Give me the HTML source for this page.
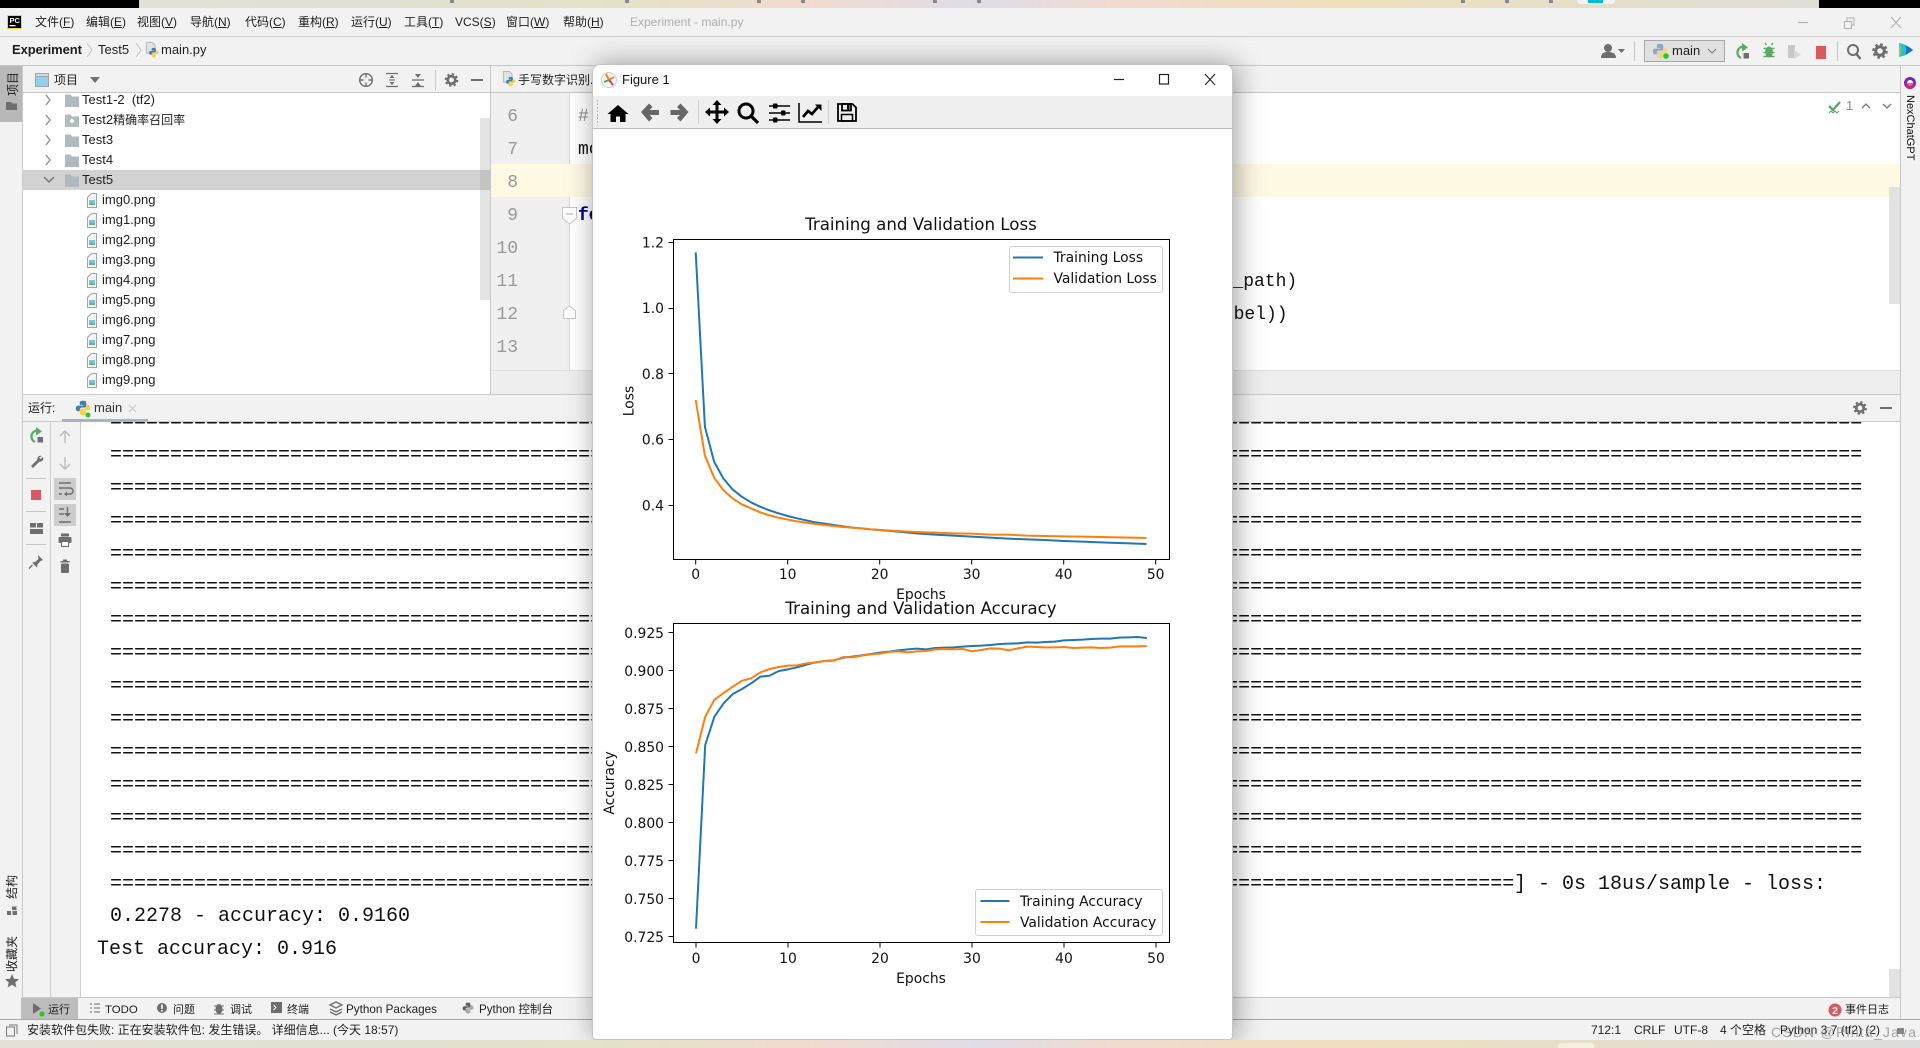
<!DOCTYPE html>
<html><head><meta charset="utf-8"><title>Experiment - main.py</title>
<style>
html,body{margin:0;padding:0;background:#f2f2f2}
#r{position:relative;width:1920px;height:1048px;overflow:hidden;background:#f2f2f2;font-family:"Liberation Sans","Noto Sans CJK SC",sans-serif;font-size:12px;color:#1e1e1e}
.b{position:absolute}
.t{position:absolute;white-space:pre;line-height:20px;height:20px}
.s13{font-size:13px}
.s11{font-size:11px}
.m{font-family:"Liberation Mono","DejaVu Sans Mono",monospace}
.n{position:absolute;font-family:"Liberation Mono",monospace;font-size:18px;color:#999;line-height:33px;height:33px;width:30px;left:488px;text-align:right}
.c{position:absolute;font-family:"Liberation Mono",monospace;font-size:18px;line-height:33px;height:33px;white-space:pre;color:#111}
.l{position:absolute;left:110px;width:1752px;height:33px;line-height:33px;overflow:hidden;white-space:pre;font-family:"Liberation Mono",monospace;font-size:20px;color:#111}
.v{position:absolute;transform:translate(-50%,-50%) rotate(-90deg);font-size:12px;line-height:14px;white-space:nowrap}
svg{position:absolute;left:0;top:0}
svg text{font-family:"DejaVu Sans",sans-serif;font-size:13.89px;fill:#111}
</style></head><body><div id="r">

<!-- wallpaper -->
<div class="b" style="left:0;top:0;width:1920px;height:8px;background:linear-gradient(90deg,#e4e0d8 0,#e2e0d2 20%,#e4e2c6 32%,#f0dccf 42%,#e0dce8 51%,#f0dccf 58%,#eee0bb 70%,#e8dfc8 80%,#dcdcdc 100%)"></div>
<div class="b" style="left:0;top:0;width:139px;height:8px;background:#000"></div>
<div class="b" style="left:1819px;top:0;width:101px;height:8px;background:#000"></div>
<div class="b" style="left:450px;top:0;width:4px;height:3px;background:#888"></div>
<div class="b" style="left:625px;top:0;width:4px;height:3px;background:#888"></div>
<div class="b" style="left:757px;top:0;width:4px;height:3px;background:#888"></div>
<div class="b" style="left:801px;top:0;width:4px;height:3px;background:#888"></div>
<div class="b" style="left:933px;top:0;width:4px;height:3px;background:#888"></div>
<div class="b" style="left:977px;top:0;width:4px;height:3px;background:#888"></div>
<div class="b" style="left:1461px;top:0;width:4px;height:3px;background:#888"></div>
<div class="b" style="left:1505px;top:0;width:4px;height:3px;background:#888"></div>
<div class="b" style="left:1549px;top:0;width:4px;height:3px;background:#888"></div>
<div class="b" style="left:1577px;top:0;width:38px;height:4px;background:#f4f4f4;border-radius:0 0 4px 4px"></div>
<div class="b" style="left:1588px;top:0;width:15px;height:3px;background:#00bcd0"></div>

<!-- lines / panels -->
<div class="b" style="left:0;top:36px;width:1920px;height:1px;background:#cfcfcf"></div>
<div class="b" style="left:0;top:65px;width:1920px;height:1px;background:#c6c6c6"></div>
<div class="b" style="left:22px;top:66px;width:1px;height:954px;background:#c9c9c9"></div>
<div class="b" style="left:0;top:66px;width:22px;height:56px;background:#b8b8b8"></div>
<div class="b" style="left:22px;top:92px;width:1878px;height:1px;background:#c6c6c6"></div>
<div class="b" style="left:1900px;top:66px;width:1px;height:954px;background:#c6c6c6"></div>

<!-- project tree -->
<div class="b" style="left:23px;top:93px;width:467px;height:301px;background:#fff"></div>
<div class="b" style="left:23px;top:170px;width:467px;height:20px;background:#d2d2d2"></div>
<div class="b" style="left:480px;top:118px;width:10px;height:182px;background:#e4e4e4"></div>
<div class="b" style="left:480px;top:170px;width:10px;height:20px;background:#c4c4c4"></div>
<div class="b" style="left:490px;top:66px;width:1px;height:328px;background:#c6c6c6"></div>

<!-- editor -->
<div class="b" style="left:491px;top:93px;width:1409px;height:277px;background:#fff"></div>
<div class="b" style="left:491px;top:93px;width:78px;height:277px;background:#f0f0f0"></div>
<div class="b" style="left:569px;top:93px;width:1px;height:277px;background:#d9d9d9"></div>
<div class="b" style="left:491px;top:164px;width:1409px;height:33px;background:#fef9e3"></div>
<div class="b" style="left:1889px;top:187px;width:11px;height:117px;background:#e2e2e2"></div>
<div class="b" style="left:491px;top:370px;width:1409px;height:24px;background:#eeeeee;border-top:1px solid #e0e0e0;box-sizing:border-box"></div>

<div class="n" style="top:101px">6</div><div class="n" style="top:134px">7</div><div class="n" style="top:167px">8</div><div class="n" style="top:200px">9</div><div class="n" style="top:233px">10</div><div class="n" style="top:266px">11</div><div class="n" style="top:299px">12</div><div class="n" style="top:332px">13</div>
<div class="c" style="left:578px;top:101px;color:#8c8c8c">#</div>
<div class="c" style="left:578px;top:134px">mo</div>
<div class="c" style="left:578px;top:200px;color:#000080;font-weight:bold">for</div>
<div class="c" style="left:1200px;top:266px">img_path)</div>
<div class="c" style="left:1212px;top:299px">label))</div>

<!-- run window -->
<div class="b" style="left:23px;top:394px;width:1877px;height:1px;background:#c9c9c9"></div>
<div class="b" style="left:23px;top:421px;width:1877px;height:1px;background:#c9c9c9"></div>
<div class="b" style="left:62px;top:419px;width:86px;height:3px;background:#a9b3c4"></div>
<div class="b" style="left:81px;top:422px;width:1819px;height:575px;background:#fff"></div>
<div class="b" style="left:50px;top:422px;width:1px;height:575px;background:#cfcfcf"></div>
<div class="b" style="left:80px;top:422px;width:1px;height:575px;background:#cfcfcf"></div>
<div class="b" style="left:54px;top:478px;width:22px;height:22px;background:#cdcdcd"></div>
<div class="b" style="left:54px;top:504px;width:22px;height:22px;background:#cdcdcd"></div>
<div class="b" style="left:26px;top:478px;width:20px;height:1px;background:#c6c6c6"></div>
<div class="b" style="left:26px;top:511px;width:20px;height:1px;background:#c6c6c6"></div>
<div class="b" style="left:26px;top:544px;width:20px;height:1px;background:#c6c6c6"></div>
<div class="b" style="left:1889px;top:969px;width:11px;height:28px;background:#e2e2e2"></div>

<!-- console -->
<div class="b" style="left:81px;top:422px;width:1819px;height:575px;overflow:hidden">
<div class="l" style="left:29px;top:-16px">======================================================================================================================================================</div>
</div>
<div class="l" style="top:439px">======================================================================================================================================================</div>
<div class="l" style="top:472px">======================================================================================================================================================</div>
<div class="l" style="top:505px">======================================================================================================================================================</div>
<div class="l" style="top:538px">======================================================================================================================================================</div>
<div class="l" style="top:571px">======================================================================================================================================================</div>
<div class="l" style="top:604px">======================================================================================================================================================</div>
<div class="l" style="top:637px">======================================================================================================================================================</div>
<div class="l" style="top:670px">======================================================================================================================================================</div>
<div class="l" style="top:703px">======================================================================================================================================================</div>
<div class="l" style="top:736px">======================================================================================================================================================</div>
<div class="l" style="top:769px">======================================================================================================================================================</div>
<div class="l" style="top:802px">======================================================================================================================================================</div>
<div class="l" style="top:835px">======================================================================================================================================================</div>
<div class="l" style="top:868px;width:1404px">======================================================================================================================================================</div>
<div class="l" style="top:868px;left:1514px;width:340px">] - 0s 18us/sample - loss:</div>
<div class="l" style="top:900px">0.2278 - accuracy: 0.9160</div>
<div class="l" style="top:933px;left:97px">Test accuracy: 0.916</div>

<!-- bottom bars -->
<div class="b" style="left:22px;top:997px;width:1878px;height:1px;background:#c9c9c9"></div>
<div class="b" style="left:21px;top:998px;width:57px;height:21px;background:#bdbdbd"></div>
<div class="b" style="left:0;top:1019px;width:1920px;height:1px;background:#a8a8a8"></div>

<!-- IDE icons -->
<svg width="1920" height="1048" viewBox="0 0 1920 1048">
<defs>
<symbol id="py" viewBox="0 0 16 16" overflow="visible">
<path fill="#3f7fb6" d="M8 .8C5.400 .8 4.800 1.800 4.800 3v1.900H8.200v.7H3.300C1.800 5.600 .8 6.800 .8 8.400c0 1.800 1 2.900 2.300 2.900H4.800V9.500C4.800 8.300 5.700 7.500 6.900 7.500h2.400c1.200 0 2-.9 2-2V3C11.300 1.700 10.300 .8 8 .8z"/>
<path fill="#f8cf45" d="M8 15.200c2.600 0 3.200-1 3.200-2.200v-1.900H7.800v-.7h4.900c1.500 0 2.500-1.200 2.500-2.800 0-1.800-1-2.900-2.300-2.900h-1.700v1.800c0 1.200-.9 2-2.100 2H6.700c-1.200 0-2 .9-2 2V13c0 1.300 1 2.200 3.300 2.200z"/>
</symbol>
<symbol id="pyf" viewBox="0 0 16 18" overflow="visible">
<path fill="#dfe3e6" stroke="#aab2b8" d="M1.500 .5h7l3 3v9h-10z"/>
<use href="#py" x="4" y="6" width="12" height="12"/>
</symbol>
<symbol id="fo" viewBox="0 0 14 13" overflow="visible">
<path fill="#aeb9c0" d="M0 .5h5.500l1.500 2h7v10.500H0z"/>
</symbol>
<symbol id="im" viewBox="0 0 10 15" overflow="visible">
<path fill="#f6f6f6" stroke="#9aa4aa" d="M.5 4.500l4-4h5v14h-9z"/>
<rect x="2" y="7" width="6" height="5" fill="#7cc5e8"/><path d="M2 12l2-3 2 2 2-1.500V12z" fill="#62b37a"/>
</symbol>
<symbol id="gear" viewBox="0 0 16 16" overflow="visible">
<circle cx="8" cy="8" r="4.300" fill="none" stroke="#6e6e6e" stroke-width="3"/>
<circle cx="8" cy="8" r="6.600" fill="none" stroke="#6e6e6e" stroke-width="2.400" stroke-dasharray="2.600 2.580"/>
</symbol>
</defs>

<!-- PC logo -->
<rect x="7.500" y="15.500" width="14" height="13" fill="#000" stroke="#f0d83c"/>
<text x="9.500" y="23" style="font-family:'Liberation Sans';font-size:7.500px;font-weight:bold;fill:#fff">PC</text>
<rect x="9.500" y="25" width="6" height="1.300" fill="#fff"/>

<!-- window controls -->
<path d="M1798 22.500h10" stroke="#b0b0b0" stroke-width="1.200"/>
<path d="M1844.500 24.500h7v7h-7zM1847 24v-3h7v7h-2.500" fill="none" stroke="#b0b0b0" transform="translate(0,-3)"/>
<path d="M1891 17l10 11M1901 17l-10 11" stroke="#b0b0b0" stroke-width="1.100"/>

<!-- nav chevrons -->
<path d="M87 43l5 7-5 7M136 43l5 7-5 7" fill="none" stroke="#c4c4c4"/>
<use href="#pyf" x="145" y="42" width="14" height="16"/>

<!-- toolbar right -->
<circle cx="1608" cy="48" r="4" fill="#6e6e6e"/><path d="M1601 58c0-5 3-6 7-6s8 1 8 6z" fill="#6e6e6e"/>
<path d="M1618 49h7l-3.500 4z" fill="#6e6e6e"/>
<rect x="1634" y="41" width="1" height="20" fill="#c8c8c8"/>
<rect x="1644.500" y="40.500" width="80" height="21" fill="#e0e0e0" stroke="#a8a8a8"/>
<use href="#py" x="1652" y="43" width="16" height="16" opacity=".55"/>
<circle cx="1666" cy="56" r="2.800" fill="#22cc22"/>
<path d="M1708 49l4 4 4-4" fill="none" stroke="#777"/>
<path d="M1746 47a6 6 0 1 0-5 11" fill="none" stroke="#59a869" stroke-width="2.200"/><path d="M1742 43l6 4.500-6 4z" fill="#59a869"/><rect x="1743.500" y="53" width="5.500" height="5.500" fill="#6e6e6e"/>
<ellipse cx="1769" cy="52" rx="3.800" ry="5.500" fill="#59a869"/><path d="M1763.500 48.500h11M1763.500 52.500h11M1763.500 56.500h11M1766.500 45l-1.500-2M1771.500 45l1.500-2" stroke="#59a869" stroke-width="1.400"/>
<path d="M1788 45h7v13h-7z" fill="#c8c8c8"/><path d="M1794 50l7 4.500-7 4.500z" fill="#d8d8d8"/>
<rect x="1816" y="46" width="10" height="13" fill="#db5860"/>
<rect x="1837" y="41" width="1" height="20" fill="#c8c8c8"/>
<circle cx="1853" cy="50" r="5" fill="none" stroke="#6e6e6e" stroke-width="2"/><path d="M1856.500 54l4 5" stroke="#6e6e6e" stroke-width="2.400"/>
<use href="#gear" x="1872" y="43" width="16" height="16"/>
<path d="M1899 43c6 1 11 4 14 7-3 3-8 6-14 7z" fill="#1ec4d8"/><path d="M1899 43c3.500 4 3.500 10 0 14z" fill="#86c850"/><path d="M1905 45.500c3 1 6 2.800 8 4.500-2 1.700-5 3.500-8 4.500 1.500-3 1.500-6 0-9z" fill="#1f6fd0"/>

<!-- right strip -->
<circle cx="1910" cy="83" r="6" fill="#7c22b8"/><circle cx="1910" cy="83" r="3" fill="#fff"/><path d="M1904 83a6 6 0 0 0 12 0z" fill="#d02a78" opacity=".7"/>

<!-- project header -->
<rect x="35.500" y="73.500" width="13" height="13" fill="#8fd2ee" stroke="#9aa4aa"/><rect x="35.500" y="73.500" width="13" height="3" fill="#d4dde2" stroke="#9aa4aa"/>
<path d="M90 77h10l-5 6z" fill="#707070"/>
<circle cx="366" cy="80" r="6.300" fill="none" stroke="#6e6e6e" stroke-width="1.400"/><path d="M366 74v3.500M366 82.500V86M360 80h3.500M368.500 80H372" stroke="#6e6e6e" stroke-width="1.400"/>
<path d="M386 73.500h12M386 86.500h12M389 80h6" stroke="#6e6e6e" stroke-width="1.300"/><path d="M392 75l-2.500 3h5zM392 85l-2.500-3h5z" fill="#6e6e6e"/>
<path d="M412 80h12" stroke="#6e6e6e" stroke-width="1.300"/><path d="M412 86.500h12" stroke="#6e6e6e" stroke-width="1.300"/><path d="M418 78l-3-4h6zM418 82l-3 4h6z" fill="#6e6e6e"/>
<rect x="435" y="70" width="1" height="20" fill="#c8c8c8"/>
<use href="#gear" x="444.500" y="73" width="14" height="14"/>
<rect x="471" y="79" width="12" height="2" fill="#6e6e6e"/>

<!-- left strip icons -->
<path d="M6 102h5l1.500 1.500H17V110H6z" fill="#6e6e6e"/>
<rect x="7" y="911" width="4" height="4" fill="#6e6e6e"/><rect x="12.500" y="911" width="4.500" height="4" fill="#6e6e6e"/><rect x="12" y="906.500" width="4.500" height="3.500" fill="#6e6e6e"/>
<path d="M12 974l2 4.800 5 .4-3.800 3.300 1.200 5-4.400-2.700-4.400 2.700 1.200-5-3.800-3.300 5-.4z" fill="#6e6e6e"/>

<!-- tree icons -->
<path d="M46 95l4 5-4 5M46 115l4 5-4 5M46 135l4 5-4 5M46 155l4 5-4 5" fill="none" stroke="#999" stroke-width="1.500"/>
<path d="M44 177l5 5 5-5" fill="none" stroke="#777" stroke-width="1.500"/>
<use href="#fo" x="65" y="94" width="14" height="13"/>
<use href="#fo" x="65" y="114" width="14" height="13"/><circle cx="72" cy="121" r="2" fill="#fff"/>
<use href="#fo" x="65" y="134" width="14" height="13"/>
<use href="#fo" x="65" y="154" width="14" height="13"/>
<use href="#fo" x="65" y="174" width="14" height="13"/>
<use href="#im" x="87" y="193" width="10" height="15"/><use href="#im" x="87" y="213" width="10" height="15"/><use href="#im" x="87" y="233" width="10" height="15"/><use href="#im" x="87" y="253" width="10" height="15"/><use href="#im" x="87" y="273" width="10" height="15"/><use href="#im" x="87" y="293" width="10" height="15"/><use href="#im" x="87" y="313" width="10" height="15"/><use href="#im" x="87" y="333" width="10" height="15"/><use href="#im" x="87" y="353" width="10" height="15"/><use href="#im" x="87" y="373" width="10" height="15"/>

<!-- editor tab + folds -->
<use href="#pyf" x="502" y="71" width="14" height="16"/>
<path d="M562.500 207.500h14v11l-7 5.500-7-5.500z" fill="#fff" stroke="#c8c8c8"/><path d="M566 214h7" stroke="#aaa"/>
<path d="M563.500 318.500v-8l6-4.500 6 4.500v8z" fill="#fff" stroke="#c8c8c8"/>

<!-- problem indicator -->
<path d="M1829 106l4 4 7-8" fill="none" stroke="#59a869" stroke-width="2.400"/><path d="M1829 113l2-2 2 2 2-2 2 2 2-2" fill="none" stroke="#59a869"/>
<path d="M1862 108l4-4 4 4M1883 104l4 4 4-4" fill="none" stroke="#777" stroke-width="1.300"/>

<!-- run header -->
<use href="#py" x="75" y="400" width="16" height="16"/>
<circle cx="88" cy="415" r="2.500" fill="#22cc22"/>
<path d="M129 405l7 7M136 405l-7 7" stroke="#c4c4c4"/>
<use href="#gear" x="1853" y="401" width="14" height="14"/>
<rect x="1880" y="407" width="12" height="2" fill="#6e6e6e"/>

<!-- run toolbar -->
<path d="M40 431a6 6 0 1 0-5 11" fill="none" stroke="#59a869" stroke-width="2.200"/><path d="M36 427l6 4.500-6 4z" fill="#59a869"/><rect x="37.500" y="437" width="5.500" height="5.500" fill="#6e6e6e"/>
<path d="M42 456c-3-1-5 1-4.500 3.500L31 466l2 2 6.500-6.500c2.500.5 4.500-1.500 3.500-4.500l-2.500 2-1.500-1.500z" fill="#6e6e6e"/>
<rect x="31" y="490" width="10" height="10" fill="#db5860"/>
<rect x="30" y="523" width="6" height="4.500" fill="#6e6e6e"/><rect x="37" y="523" width="6" height="4.500" fill="#6e6e6e"/><rect x="30" y="529" width="13" height="5" fill="#6e6e6e"/>
<path d="M38 555l5 5-2.500 1-3 3.500-.5 3-5-5 3-.5 3.500-3z" fill="#6e6e6e"/><path d="M32.500 565l-3.500 3.500" stroke="#6e6e6e" stroke-width="1.400"/>
<path d="M65 443v-12M60 436l5-5 5 5" fill="none" stroke="#c2c2c2" stroke-width="1.600"/>
<path d="M65 457v12M60 464l5 5 5-5" fill="none" stroke="#c2c2c2" stroke-width="1.600"/>
<path d="M59 483h12M59 488h11a2.500 2.500 0 0 1 0 6h-5M59 494h3" fill="none" stroke="#6e6e6e" stroke-width="1.400"/><path d="M67 491.500l-3 2.500 3 2.500z" fill="#6e6e6e"/>
<path d="M59 509h5M59 514h5M59 522h12M67.500 507v8" stroke="#6e6e6e" stroke-width="1.400"/><path d="M64 513h7l-3.500 4z" fill="#6e6e6e"/>
<rect x="61" y="533.500" width="8" height="3" fill="#6e6e6e"/><rect x="58.500" y="537" width="13" height="6" rx="1" fill="#6e6e6e"/><rect x="61.500" y="541.500" width="7" height="5" fill="#fff" stroke="#6e6e6e"/>
<rect x="60.500" y="561" width="9" height="1.500" fill="#6e6e6e"/><rect x="63" y="559.500" width="4" height="1.500" fill="#6e6e6e"/><rect x="61" y="563.500" width="8" height="9.500" rx="1" fill="#6e6e6e"/>

<!-- bottom tool icons -->
<path d="M33 1003l8 5.500-8 5.500z" fill="#6e6e6e"/><circle cx="42" cy="1014" r="2.500" fill="#22cc22"/>
<path d="M90 1004h2M94 1004h6M90 1008h2M94 1008h6M90 1012h2M94 1012h6" stroke="#6e6e6e"/>
<circle cx="162" cy="1008" r="5" fill="#6e6e6e"/><rect x="161.200" y="1004.500" width="1.600" height="4.500" fill="#fff"/><rect x="161.200" y="1010" width="1.600" height="1.500" fill="#fff"/>
<ellipse cx="219" cy="1009" rx="3.500" ry="5" fill="#6e6e6e"/><path d="M214 1006h10M214 1010h10M214 1014h10" stroke="#6e6e6e"/>
<rect x="271" y="1002" width="11" height="11" fill="#6e6e6e"/><path d="M273.500 1005l2.500 2.500-2.500 2.500" fill="none" stroke="#fff"/>
<path d="M330 1005l6-3 6 3-6 3zM330 1009l6 3 6-3M330 1012l6 3 6-3" fill="none" stroke="#6e6e6e" stroke-width="1.300"/>
<g transform="translate(462,1002)"><use href="#py" x="0" y="0" width="12" height="12" style="filter:grayscale(1) brightness(.8)"/></g>
<path d="M6.500 1027h8v9h-8zM9 1025h8v9" fill="none" stroke="#777"/>
<circle cx="1835" cy="1010" r="6.500" fill="#db5860"/>
<text x="1835" y="1014" text-anchor="middle" style="font-family:'Liberation Sans';font-size:10.500px;font-weight:bold;fill:#fff">2</text>
<rect x="1897" y="1028" width="7" height="6" fill="#888"/>
</svg>

<!-- left strip text -->
<div class="v" style="left:13px;top:84px">项目</div>
<div class="v" style="left:12px;top:887px">结构</div>
<div class="v" style="left:12px;top:954px">收藏夹</div>
<div class="b" style="left:1903px;top:95px;writing-mode:vertical-rl;font-size:11px;line-height:14px;color:#111">NexChatGPT</div>

<!-- menu -->
<div class="t" style="left:35px;top:12px">文件(<u>F</u>)</div>
<div class="t" style="left:86px;top:12px">编辑(<u>E</u>)</div>
<div class="t" style="left:137px;top:12px">视图(<u>V</u>)</div>
<div class="t" style="left:190px;top:12px">导航(<u>N</u>)</div>
<div class="t" style="left:245px;top:12px">代码(<u>C</u>)</div>
<div class="t" style="left:298px;top:12px">重构(<u>R</u>)</div>
<div class="t" style="left:351px;top:12px">运行(<u>U</u>)</div>
<div class="t" style="left:404px;top:12px">工具(<u>T</u>)</div>
<div class="t" style="left:455px;top:12px">VCS(<u>S</u>)</div>
<div class="t" style="left:506px;top:12px">窗口(<u>W</u>)</div>
<div class="t" style="left:563px;top:12px">帮助(<u>H</u>)</div>
<div class="t" style="left:630px;top:12px;color:#aeaeae">Experiment - main.py</div>

<!-- breadcrumbs -->
<div class="t s13" style="left:12px;top:40px;font-weight:bold;letter-spacing:-.1px">Experiment</div>
<div class="t s13" style="left:98px;top:40px">Test5</div>
<div class="t s13" style="left:161px;top:40px">main.py</div>
<div class="t s13" style="left:1672px;top:41px">main</div>

<!-- project panel text -->
<div class="t" style="left:54px;top:70px">项目</div>
<div class="t" style="left:518px;top:70px">手写数字识别.py</div>
<div class="t s13" style="left:82px;top:90px">Test1-2  (tf2)</div>
<div class="t s13" style="left:82px;top:110px">Test2<span style="font-size:12px">精确率召回率</span></div>
<div class="t s13" style="left:82px;top:130px">Test3</div>
<div class="t s13" style="left:82px;top:150px">Test4</div>
<div class="t s13" style="left:82px;top:170px">Test5</div>
<div class="t s13" style="left:102px;top:190px">img0.png</div>
<div class="t s13" style="left:102px;top:210px">img1.png</div>
<div class="t s13" style="left:102px;top:230px">img2.png</div>
<div class="t s13" style="left:102px;top:250px">img3.png</div>
<div class="t s13" style="left:102px;top:270px">img4.png</div>
<div class="t s13" style="left:102px;top:290px">img5.png</div>
<div class="t s13" style="left:102px;top:310px">img6.png</div>
<div class="t s13" style="left:102px;top:330px">img7.png</div>
<div class="t s13" style="left:102px;top:350px">img8.png</div>
<div class="t s13" style="left:102px;top:370px">img9.png</div>
<div class="t" style="left:28px;top:398px">运行:</div>
<div class="t s13" style="left:94px;top:398px;color:#333">main</div>
<div class="t s13" style="left:1846px;top:96px;color:#888">1</div>

<!-- bottom text -->
<div class="t s11" style="left:48px;top:1000px">运行</div>
<div class="t" style="left:105px;top:1000px;font-size:11.4px">TODO</div>
<div class="t s11" style="left:173px;top:1000px">问题</div>
<div class="t s11" style="left:230px;top:1000px">调试</div>
<div class="t s11" style="left:287px;top:1000px">终端</div>
<div class="t" style="left:346px;top:1000px;font-size:11.7px">Python Packages</div>
<div class="t" style="left:479px;top:1000px;font-size:11.6px">Python 控制台</div>
<div class="t s11" style="left:1845px;top:1000px">事件日志</div>
<div class="t" style="left:27px;top:1020px">安装软件包失败: 正在安装软件包: 发生错误。 详细信息... (今天 18:57)</div>
<div class="t" style="left:1591px;top:1020px">712:1</div>
<div class="t" style="left:1634px;top:1020px">CRLF</div>
<div class="t" style="left:1674px;top:1020px">UTF-8</div>
<div class="t" style="left:1720px;top:1020px">4 个空格</div>
<div class="t" style="left:1780px;top:1020px">Python 3.7 (tf2) (2)</div>
<div class="t" style="left:1771px;top:1022px;color:rgba(130,130,130,.7);font-size:14px;letter-spacing:1.2px">CSDN @Pinta_Java</div>

<!-- Figure window -->
<div class="b" style="left:592px;top:64px;width:641px;height:976px;background:#fff;border-radius:8px 8px 4px 4px;box-shadow:3px 0 28px rgba(0,0,0,.38);outline:1px solid rgba(150,150,150,.55);outline-offset:-1px"></div>
<div class="b" style="left:593px;top:96px;width:639px;height:32px;background:#efefef;border-bottom:1px solid #bcbcbc"></div>
<div class="t s13" style="left:622px;top:70px;color:#111">Figure 1</div>

<svg width="1920" height="1048" viewBox="0 0 1920 1048">
<!-- title icon + controls -->
<circle cx="609" cy="80" r="7.500" fill="#fafafa" stroke="#c8c8c8"/>
<path d="M609 80l-3-6M609 80l5-3" stroke="#e8892c" stroke-width="2"/><path d="M609 80l-5 2" stroke="#4aa84a" stroke-width="2"/><path d="M609 80l4 5" stroke="#d44" stroke-width="2"/>
<path d="M1114 79.500h10" stroke="#222" stroke-width="1.200"/>
<rect x="1159.500" y="74.500" width="9" height="9.500" fill="none" stroke="#222" stroke-width="1.200"/>
<path d="M1205 74l10 11M1215 74l-10 11" stroke="#222" stroke-width="1.100"/>

<!-- toolbar icons -->
<path d="M597.500 100v25" stroke="#aaa" stroke-dasharray="1.500 2"/>
<path d="M618 105l10.500 9h-3v8h-5.500v-5.500h-4V122H610.500v-8h-3z" fill="#000"/>
<path d="M641 112l8-8.500 3.500 3.500-3 3h9.500v5h-9.500l3 3-3.500 3.500z" fill="#666"/>
<path d="M688.500 112l-8-8.500-3.500 3.500 3 3h-9.500v5h9.500l-3 3 3.500 3.500z" fill="#666"/>
<rect x="698" y="100" width="1" height="24" fill="#cfcfcf"/>
<path d="M717 100l4.500 5h-3v5.500h5.500v-3l5 4.500-5 4.500v-3h-5.500v5.500h3l-4.500 5-4.500-5h3v-5.500h-5.500v3l-5-4.500 5-4.500v3h5.500V105h-3z" fill="#000"/>
<circle cx="746" cy="111" r="7" fill="none" stroke="#000" stroke-width="3"/><path d="M751 116l7 7" stroke="#000" stroke-width="3.200"/>
<path d="M769 106h21M769 113h21M769 120h21" stroke="#000" stroke-width="1.500"/><rect x="773" y="103.500" width="4.500" height="5" rx="1" fill="#000"/><rect x="781" y="110.500" width="4.500" height="5" rx="1" fill="#000"/><rect x="773" y="117.500" width="4.500" height="5" rx="1" fill="#000"/>
<path d="M799 103v19h23" fill="none" stroke="#000" stroke-width="1.500"/><path d="M803 117l5-6 4 3 6-7" fill="none" stroke="#000" stroke-width="2.800"/><path d="M815 104.500h6.500v6.500z" fill="#000"/>
<rect x="828" y="100" width="1" height="24" fill="#cfcfcf"/>
<path d="M838 104h14.500l3.500 3.500V121h-18z" fill="none" stroke="#000" stroke-width="1.800"/><rect x="842" y="104" width="9" height="6.500" fill="none" stroke="#000" stroke-width="1.800"/><rect x="847" y="105" width="2.500" height="4.500" fill="#000"/><rect x="841.500" y="114.500" width="11" height="6.500" fill="none" stroke="#000" stroke-width="1.500"/>

<!-- Axes 1 -->
<text x="921" y="230" text-anchor="middle" style="font-size:16.67px">Training and Validation Loss</text>
<g stroke="#000" stroke-width="1" fill="none">
<path d="M695.700 559.500v5M787.700 559.500v5M879.700 559.500v5M971.700 559.500v5M1063.700 559.500v5M1155.700 559.500v5"/>
<path d="M668.500 242.500h5M668.500 308.500h5M668.500 373.500h5M668.500 439.500h5M668.500 505.500h5"/>
</g>
<g transform="translate(695.700,200) scale(9.2,.33333)" fill="none" stroke-width="2" stroke-linejoin="round">
<polyline vector-effect="non-scaling-stroke" stroke="#1f77b4" points="0,157 1,680 2,785 3,835 4,868 5,890 6,907 7,920 8,931 9,940 10,948 11,955 12,961 13,967 14,971 15,975 16,979 17,983 18,985 19,988 20,990 22,995 24,1000 26,1004 28,1007 30,1010 32,1013 34,1016 36,1018 38,1020 40,1023 42,1025 44,1027 46,1029 49,1032"/>
<polyline vector-effect="non-scaling-stroke" stroke="#ff7f0e" points="0,600 1,767 2,833 3,870 4,895 5,913 6,925 7,937 8,946 9,953 10,959 11,964 12,968 13,972 14,975 15,978 16,981 17,983 18,985 19,988 20,990 22,993 24,996 26,998 28,1000 30,1001 32,1004 34,1004 36,1007 38,1008 40,1009 42,1010 44,1011 46,1012 49,1014"/>
</g>
<rect x="673.500" y="239.500" width="496" height="320" fill="none" stroke="#000"/>
<text x="664" y="247.500" text-anchor="end">1.2</text><text x="664" y="313" text-anchor="end">1.0</text><text x="664" y="379" text-anchor="end">0.8</text><text x="664" y="444.500" text-anchor="end">0.6</text><text x="664" y="510.500" text-anchor="end">0.4</text>
<text x="695.700" y="579" text-anchor="middle">0</text><text x="787.700" y="579" text-anchor="middle">10</text><text x="879.700" y="579" text-anchor="middle">20</text><text x="971.700" y="579" text-anchor="middle">30</text><text x="1063.700" y="579" text-anchor="middle">40</text><text x="1155.700" y="579" text-anchor="middle">50</text>
<text x="921" y="599" text-anchor="middle">Epochs</text>
<text transform="translate(633.500,401) rotate(-90)" text-anchor="middle">Loss</text>
<rect x="1009.500" y="246.500" width="153" height="46" rx="2.500" fill="#fff" stroke="#d0d0d0"/>
<path d="M1013 257.500h30" stroke="#1f77b4" stroke-width="2"/><path d="M1013 278.500h30" stroke="#ff7f0e" stroke-width="2"/>
<text x="1053.500" y="262">Training Loss</text><text x="1053.500" y="283">Validation Loss</text>

<!-- Axes 2 -->
<text x="921" y="614" text-anchor="middle" style="font-size:16.67px">Training and Validation Accuracy</text>
<g stroke="#000" stroke-width="1" fill="none">
<path d="M696 942.500v5M788 942.500v5M880 942.500v5M972 942.500v5M1064 942.500v5M1156 942.500v5"/>
<path d="M668.500 632.500h5M668.500 670.500h5M668.500 708.500h5M668.500 746.500h5M668.500 784.500h5M668.500 822.500h5M668.500 860.500h5M668.500 898.500h5M668.500 936.500h5"/>
</g>
<g transform="translate(696,590) scale(9.2,.33333)" fill="none" stroke-width="2" stroke-linejoin="round">
<polyline vector-effect="non-scaling-stroke" stroke="#1f77b4" points="0,1016 1,465 2,380 3,340 4,312 5,297 6,280 7,260 8,257 9,243 10,238 11,232 12,224 13,217 14,213 15,211 16,203 17,200 18,196 19,192 20,188 21,185 22,181 23,178 24,176 25,178 26,174 27,173 28,172 29,170 30,168 31,167 32,165 33,162 34,161 35,160 36,157 37,158 38,156 39,155 40,151 41,150 42,149 43,147 44,146 45,146 46,143 47,142 48,141 49,144"/>
<polyline vector-effect="non-scaling-stroke" stroke="#ff7f0e" points="0,490 1,380 2,329 3,309 4,290 5,272 6,265 7,247 8,237 9,231 10,227 11,226 12,220 13,217 14,213 15,212 16,201 17,202 18,197 19,193 20,191 21,186 22,184 23,187 24,184 25,183 26,178 27,177 28,178 29,177 30,184 31,180 32,175 33,176 34,181 35,175 36,170 37,171 38,172 39,172 40,171 41,174 42,173 43,172 44,174 45,173 46,169 47,169 48,169 49,168"/>
</g>
<rect x="673.500" y="623.500" width="496" height="319" fill="none" stroke="#000"/>
<text x="664" y="638" text-anchor="end">0.925</text><text x="664" y="676" text-anchor="end">0.900</text><text x="664" y="714" text-anchor="end">0.875</text><text x="664" y="752" text-anchor="end">0.850</text><text x="664" y="790" text-anchor="end">0.825</text><text x="664" y="828" text-anchor="end">0.800</text><text x="664" y="866" text-anchor="end">0.775</text><text x="664" y="904" text-anchor="end">0.750</text><text x="664" y="942" text-anchor="end">0.725</text>
<text x="696" y="963" text-anchor="middle">0</text><text x="788" y="963" text-anchor="middle">10</text><text x="880" y="963" text-anchor="middle">20</text><text x="972" y="963" text-anchor="middle">30</text><text x="1064" y="963" text-anchor="middle">40</text><text x="1156" y="963" text-anchor="middle">50</text>
<text x="921" y="983" text-anchor="middle">Epochs</text>
<text transform="translate(614,783) rotate(-90)" text-anchor="middle">Accuracy</text>
<rect x="975.500" y="889.500" width="187" height="46" rx="2.500" fill="#fff" stroke="#d0d0d0"/>
<path d="M980.500 901h29" stroke="#1f77b4" stroke-width="2"/><path d="M980.500 922h29" stroke="#ff7f0e" stroke-width="2"/>
<text x="1020" y="906">Training Accuracy</text><text x="1020" y="927">Validation Accuracy</text>
</svg>

<!-- bottom wallpaper -->
<div class="b" style="left:0;top:1040px;width:1920px;height:8px;background:linear-gradient(90deg,#e4e0d8 0,#e2e0d2 20%,#e4e2c6 32%,#f0dccf 42%,#e0dce8 51%,#f0dccf 58%,#eee0bb 70%,#e8dfc8 80%,#dcdcdc 100%)"></div>
<div class="b" style="left:1558px;top:1043px;width:36px;height:5px;background:#f4efe0;border-radius:3px 3px 0 0"></div>
</div></body></html>
